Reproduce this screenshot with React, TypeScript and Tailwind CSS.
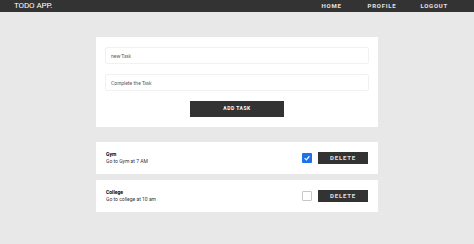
import { useState } from "react";

interface Task {
  id: number;
  title: string;
  desc: string;
  done: boolean;
}

const initialTasks: Task[] = [
  { id: 1, title: "Gym", desc: "Go to Gym at 7 AM", done: true },
  { id: 2, title: "College", desc: "Go to college at 10 am", done: false },
];

export default function App() {
  const [tasks, setTasks] = useState<Task[]>(initialTasks);
  const [title, setTitle] = useState("new Task");
  const [desc, setDesc] = useState("Complete the Task");

  const toggle = (id: number) =>
    setTasks((t) => t.map((x) => (x.id === id ? { ...x, done: !x.done } : x)));

  const remove = (id: number) => setTasks((t) => t.filter((x) => x.id !== id));

  const addTask = () => {
    if (!title.trim()) return;
    setTasks((t) => [...t, { id: Date.now(), title, desc, done: false }]);
  };

  return (
    <div className="min-h-[244px] w-full bg-[#e8e8e8] font-['Roboto',sans-serif]">
      {/* Navbar */}
      <nav className="h-3 bg-[#333333] flex items-center justify-between pl-[14px] pr-[26px]">
        <span className="text-[8px] leading-none text-white tracking-[-0.1px]">TODO APP.</span>
        <div className="flex text-[6px] font-bold tracking-[0.75px] text-[#e4e4e4] leading-none">
          <span>HOME</span>
          <span className="ml-[26px]">PROFILE</span>
          <span className="ml-[24px]">LOGOUT</span>
        </div>
      </nav>

      <div className="w-[282px] ml-[96px] pt-[25px]">
        {/* Form */}
        <div className="bg-white pt-[10px] pb-[10px] px-[9px] flex flex-col">
          <input
            value={title}
            onChange={(e) => setTitle(e.target.value)}
            className="h-[17px] border border-[#f1f1f1] rounded-[2px] px-[5px] text-[5px] text-[#555] font-['Lato',sans-serif] outline-none"
          />
          <input
            value={desc}
            onChange={(e) => setDesc(e.target.value)}
            className="h-[17px] mt-[10px] border border-[#f1f1f1] rounded-[2px] px-[5px] text-[5px] text-[#555] font-['Lato',sans-serif] outline-none"
          />
          <button
            onClick={addTask}
            className="self-center mt-[10px] w-[94px] h-4 bg-[#333333] text-white text-[5px] font-bold tracking-[0.5px]"
          >
            ADD TASK
          </button>
        </div>

        {/* Tasks */}
        <div className="mt-[15px] flex flex-col gap-[6px]">
          {tasks.map((t) => (
            <div key={t.id} className="h-8 bg-white flex items-center pl-[10px] pr-[10px]">
              <div className="flex-1 flex flex-col leading-none">
                <span className="text-[5px] font-bold text-black">{t.title}</span>
                <span className="text-[5px] text-[#333] mt-[2px]">{t.desc}</span>
              </div>
              <button
                onClick={() => toggle(t.id)}
                className={`w-[10px] h-[10px] rounded-[1px] flex items-center justify-center ${
                  t.done ? "bg-[#1a73e8]" : "bg-white border border-[#c8c8c8]"
                }`}
              >
                {t.done && (
                  <svg viewBox="0 0 10 10" className="w-[8px] h-[8px]">
                    <path d="M2 5.2 L4.2 7.3 L8 2.8" fill="none" stroke="white" strokeWidth="1.5" />
                  </svg>
                )}
              </button>
              <button
                onClick={() => remove(t.id)}
                className="ml-[6px] w-[50px] h-3 bg-[#333333] text-[#e0e0e0] text-[6px] font-bold tracking-[0.8px] leading-none"
              >
                DELETE
              </button>
            </div>
          ))}
        </div>
      </div>
    </div>
  );
}
